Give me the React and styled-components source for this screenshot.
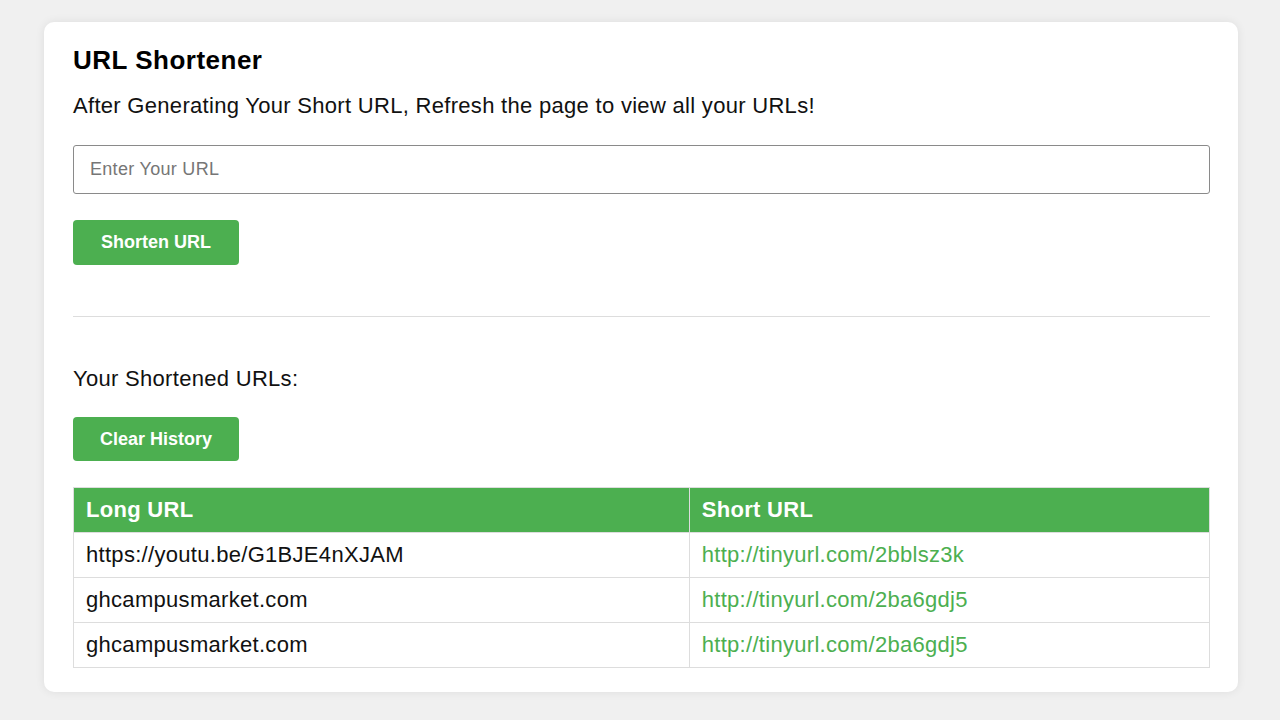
import React from 'react';
import styled, { createGlobalStyle } from 'styled-components';

const GlobalStyle = createGlobalStyle`
  html, body {
    margin: 0;
    padding: 0;
    background: #f0f0f0;
    font-family: 'Liberation Sans', Arial, sans-serif;
    color: #111;
  }
`;

const Page = styled.div`
  padding: 22px 42px 28px 44px;
`;

const Card = styled.div`
  background: #ffffff;
  border-radius: 10px;
  box-shadow: 0 0 10px rgba(0, 0, 0, 0.08);
  padding: 23px 28px 24px 29px;
`;

const Title = styled.h2`
  font-size: 26px;
  line-height: 30px;
  letter-spacing: 0.5px;
  font-weight: bold;
  margin: 0;
  color: #000;
`;

const Note = styled.p`
  font-size: 22px;
  line-height: 26px;
  letter-spacing: 0.3px;
  margin: 18px 0 26px 0;
  color: #111;
`;

const UrlInput = styled.input`
  display: block;
  width: 100%;
  box-sizing: border-box;
  height: 49px;
  padding: 0 16px;
  font-size: 18px;
  letter-spacing: 0.3px;
  font-family: 'Liberation Sans', Arial, sans-serif;
  border: 1px solid #8a8a8a;
  border-radius: 3px;
  outline: none;

  &::placeholder {
    color: #767676;
  }
`;

const Button = styled.button`
  display: block;
  width: 166px;
  height: ${(p) => p.$height || 45}px;
  margin-top: ${(p) => p.$top || 0}px;
  background: #4caf50;
  color: #fff;
  border: none;
  border-radius: 4px;
  font-size: 18px;
  font-weight: bold;
  font-family: 'Liberation Sans', Arial, sans-serif;
  cursor: pointer;
`;

const Divider = styled.hr`
  border: none;
  border-top: 1px solid #ddd;
  margin: 51px 0 0 0;
`;

const SectionLabel = styled.p`
  font-size: 22px;
  line-height: 26px;
  letter-spacing: 0.3px;
  margin: 49px 0 0 0;
`;

const Table = styled.table`
  width: 100%;
  margin-top: 26px;
  border-collapse: collapse;
  font-size: 22px;
  letter-spacing: 0.3px;
`;

const Th = styled.th`
  background: #4caf50;
  color: #fff;
  text-align: left;
  font-weight: bold;
  height: 44px;
  padding: 0 12px;
  border: 1px solid #ddd;
  width: ${(p) => p.$width || 'auto'};
`;

const Td = styled.td`
  height: 44px;
  padding: 0 12px;
  border: 1px solid #ddd;
  color: #111;
`;

const ShortLink = styled.a`
  color: #4caf50;
  text-decoration: none;
`;

const rows = [
  { long: 'https://youtu.be/G1BJE4nXJAM', short: 'http://tinyurl.com/2bblsz3k' },
  { long: 'ghcampusmarket.com', short: 'http://tinyurl.com/2ba6gdj5' },
  { long: 'ghcampusmarket.com', short: 'http://tinyurl.com/2ba6gdj5' },
];

export default function App() {
  return (
    <>
      <GlobalStyle />
      <Page>
        <Card>
          <Title>URL Shortener</Title>
          <Note>After Generating Your Short URL, Refresh the page to view all your URLs!</Note>
          <UrlInput placeholder="Enter Your URL" />
          <Button $top={26}>Shorten URL</Button>
          <Divider />
          <SectionLabel>Your Shortened URLs:</SectionLabel>
          <Button $top={25} $height={44}>Clear History</Button>
          <Table>
            <thead>
              <tr>
                <Th $width="54.2%">Long URL</Th>
                <Th>Short URL</Th>
              </tr>
            </thead>
            <tbody>
              {rows.map((r, i) => (
                <tr key={i}>
                  <Td>{r.long}</Td>
                  <Td>
                    <ShortLink href="#">{r.short}</ShortLink>
                  </Td>
                </tr>
              ))}
            </tbody>
          </Table>
        </Card>
      </Page>
    </>
  );
}
